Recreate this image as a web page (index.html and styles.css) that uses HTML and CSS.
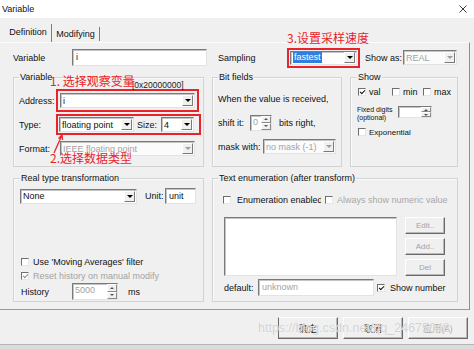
FILE: index.html
```html
<!DOCTYPE html>
<html>

<head>
  <title>Variable</title>
  <link rel="stylesheet" href="styles.css">
</head>

<body>
  <div class="window">
    <!-- Title bar -->
    <div class="titlebar">
      <span>Variable</span>
      <svg class="close" width="8" height="8" viewBox="0 0 8 8">
        <path d="M0.5 0.5 L7.5 7.5 M7.5 0.5 L0.5 7.5" stroke="#222" stroke-width="0.9" fill="none"/>
      </svg>
    </div>

    <!-- Tabs -->
    <div class="tabs">
      <div class="tab active">Definition</div>
      <div class="tab">Modifying</div>
    </div>

    <div class="panel">
      <!-- Variable / Sampling row -->
      <div class="top-row">
        <span class="lbl-var">Variable</span>
        <div class="edit var-name">i</div>
        <span class="lbl-sampling">Sampling</span>
        <div class="combo sampling mark"><span class="selected">fastest</span><span class="drop"></span></div>
        <span class="lbl-showas">Show as:</span>
        <div class="combo showas disabled"><span>REAL</span><span class="drop"></span></div>
      </div>

      <div class="groups-top">
        <!-- Variable group -->
        <div class="group g-variable">
          <div class="group-title">Variable</div>
          <div class="rows">
            <div class="row">
              <span class="row-lbl">Address:</span>
              <div class="combo address mark"><span>i</span><span class="drop"></span></div>
            </div>
            <div class="row">
              <span class="row-lbl">Type:</span>
              <div class="type-wrap mark">
                <div class="combo type"><span>floating point</span><span class="drop"></span></div>
                <span class="size-lbl">Size:</span>
                <div class="combo size"><span>4</span><span class="drop"></span></div>
              </div>
            </div>
            <div class="row">
              <span class="row-lbl">Format:</span>
              <div class="combo format disabled"><span>IEEE floating point</span><span class="drop"></span></div>
            </div>
          </div>
          <span class="addr-value">[0x20000000]</span>
          <span class="note note-1">1. 选择观察变量</span>
          <span class="note note-2">2.选择数据类型</span>
          <svg class="arrow" width="14" height="22" viewBox="0 0 14 22">
            <path d="M2 21 L10 3 M10 3 L6.5 6.5 M10 3 L10.6 8" stroke="#e8232b" stroke-width="1.3" fill="none"/>
          </svg>
        </div>

        <!-- Bit fields group -->
        <div class="group g-bits">
          <div class="group-title">Bit fields</div>
          <div class="rows bit-rows">
            <div class="row">When the value is received,</div>
            <div class="row">
              <span class="shift-lbl">shift it:</span>
              <div class="spin shift"><span class="spin-val">0</span><span class="updown"><span class="up"></span><span class="down"></span></span></div>
              <span class="bits-lbl">bits right,</span>
            </div>
            <div class="row">
              <span class="mask-lbl">mask with:</span>
              <div class="combo mask disabled"><span>no mask (-1)</span><span class="drop"></span></div>
            </div>
          </div>
        </div>

        <!-- Show group -->
        <div class="group g-show">
          <div class="group-title">Show</div>
          <div class="show-checks">
            <label class="check check-val"><span class="box checked"></span>val</label>
            <label class="check check-min"><span class="box"></span>min</label>
            <label class="check"><span class="box"></span>max</label>
          </div>
          <div class="fixed-row">
            <span class="fixed-lbl">Fixed digits<br>(optional)</span>
            <div class="spin fixed"><span class="spin-val"></span><span class="updown"><span class="up"></span><span class="down"></span></span></div>
          </div>
          <label class="check exp"><span class="box"></span>Exponential</label>
        </div>
      </div>

      <div class="groups-bottom">
        <!-- Real type transformation -->
        <div class="group g-real">
          <div class="group-title">Real type transformation</div>
          <div class="real-row">
            <div class="combo none"><span>None</span><span class="drop"></span></div>
            <span class="unit-lbl">Unit:</span>
            <div class="edit unit">unit</div>
          </div>
          <div class="real-bottom">
            <label class="check avg"><span class="box"></span>Use 'Moving Averages' filter</label>
            <label class="check avg reset"><span class="box checked"></span>Reset history on manual modify</label>
            <div class="history-row">
              <span class="history-lbl">History</span>
              <div class="spin history"><span class="spin-val">5000</span><span class="updown"><span class="up"></span><span class="down"></span></span></div>
              <span class="ms-lbl">ms</span>
            </div>
          </div>
        </div>

        <!-- Text enumeration -->
        <div class="group g-enum">
          <div class="group-title">Text enumeration (after transform)</div>
          <div class="enum-checks">
            <label class="check enum-on"><span class="box"></span><span class="clip">Enumeration enabled</span></label>
            <label class="check always"><span class="box"></span>Always show numeric value</label>
          </div>
          <div class="enum-list-row">
            <div class="listbox"></div>
            <div class="enum-buttons">
              <div class="btn small">Edit..</div>
              <div class="btn small">Add..</div>
              <div class="btn small">Del</div>
            </div>
          </div>
          <div class="default-row">
            <span class="default-lbl">default:</span>
            <div class="edit default disabled-text">unknown</div>
            <label class="check show-num"><span class="box checked"></span>Show number</label>
          </div>
        </div>
      </div>
    </div>

    <!-- Dialog buttons -->
    <div class="dialog-buttons">
      <div class="btn main default-btn">确定</div>
      <div class="btn main">取消</div>
      <div class="btn main disabled-text">应用(A)</div>
    </div>

    <span class="note note-3">3.设置采样速度</span>
    <span class="watermark">https://blog.csdn.net/qq_24675048</span>
  </div>
</body>

</html>
```

FILE: styles.css
```css
/* Global */
* {
  box-sizing: border-box;
}

body {
  margin: 0;
  width: 474px;
  height: 349px;
  overflow: hidden;
  background-color: #dcdcdc;
  font-family: "Liberation Sans", Arial, sans-serif;
  font-size: 9px;
  color: #111;
}

.window {
  position: relative;
  height: 345px;
  background-color: #f0f0f0;
  border-bottom: 1px solid #b4b4b4;
}

/* Title bar */
.titlebar {
  height: 18px;
  background-color: #fff;
  display: flex;
  align-items: center;
  justify-content: space-between;
  padding: 0 7px 0 2px;
}

/* Tabs */
.tabs {
  display: flex;
  align-items: flex-end;
  height: 24px;
  padding-left: 5px;
}

.tab {
  width: 48px;
  height: 14px;
  margin-bottom: 1px;
  display: flex;
  align-items: center;
  justify-content: center;
  border-right: 1px solid #7d7d7d;
}

.tab.active {
  width: 47px;
  height: 18px;
  margin-bottom: 0;
  padding-bottom: 3px;
}

/* Tab panel */
.panel {
  width: 470px;
  height: 268px;
  padding: 6px 0 0 13px;
  border-top: 1px solid #fbfbfb;
  border-right: 1px solid #8e8e8e;
  border-bottom: 1px solid #9a9a9a;
}

.top-row {
  display: flex;
  align-items: center;
  height: 17px;
}

.lbl-var {
  width: 59px;
}

.lbl-sampling {
  width: 72px;
  margin-left: 11px;
}

.lbl-showas {
  width: 38px;
  margin-left: 8px;
}

/* Controls */
.edit,
.combo,
.spin {
  background-color: #fff;
  border: 1px solid;
  border-color: #7a7a7a #e3e3e3 #e3e3e3 #7a7a7a;
  box-shadow: inset 1px 1px 0 #c4c4c4;
}

.edit {
  height: 17px;
  padding-left: 3px;
  line-height: 15px;
}

.combo {
  height: 15px;
  display: flex;
  align-items: center;
  justify-content: space-between;
  padding-left: 2px;
}

.drop {
  width: 11px;
  height: 11px;
  margin-right: 1px;
  display: flex;
  align-items: center;
  justify-content: center;
  background-color: #f0f0f0;
  border: 1px solid;
  border-color: #fff #7a7a7a #7a7a7a #fff;
}

.drop::after {
  content: "";
  border-left: 3px solid transparent;
  border-right: 3px solid transparent;
  border-top: 3px solid #000;
}

.combo.disabled {
  background-color: #fbfbfb;
  color: #a3a3a3;
}

.combo.disabled .drop::after {
  border-top-color: #9c9c9c;
}

.disabled-text {
  color: #a3a3a3;
}

.var-name {
  width: 135px;
}

.sampling {
  width: 67px;
  height: 14px;
}

.selected {
  background-color: #2f7fe0;
  color: #fff;
  padding: 0 1px;
  line-height: 11px;
}

.showas {
  width: 54px;
}

/* Red annotations */
.mark {
  outline: 2px solid #e8232b;
  outline-offset: 2px;
}

.sampling.mark {
  outline-offset: 1px;
}

.note {
  position: absolute;
  color: #e8232b;
  font-family: "Noto Sans CJK SC", sans-serif;
  font-size: 12px;
  line-height: 14px;
  white-space: nowrap;
}

.note-1 {
  left: 36px;
  top: -4px;
}

.note-2 {
  left: 36px;
  top: 73px;
}

.note-3 {
  left: 287px;
  top: 31px;
}

.arrow {
  position: absolute;
  left: 38px;
  top: 54px;
}

.addr-value {
  position: absolute;
  left: 118px;
  top: 2px;
  font-size: 8.5px;
  line-height: 10px;
  color: #222;
}

/* Group boxes */
.groups-top {
  display: grid;
  grid-template-columns: 191px 130px 108px;
  column-gap: 8px;
  margin-top: 11px;
  height: 90px;
}

.groups-bottom {
  display: grid;
  grid-template-columns: 191px 246px;
  column-gap: 8px;
  margin-top: 11px;
  height: 124px;
}

.group {
  position: relative;
  border: 1px solid #d3d3d3;
  box-shadow: inset 1px 1px 0 #fafafa;
  padding: 0 5px;
}

.group-title {
  width: max-content;
  margin-top: -6px;
  padding: 0 1px;
  line-height: 11px;
  background-color: #f0f0f0;
}

.rows {
  display: flex;
  flex-direction: column;
  gap: 9px;
  padding-top: 10px;
}

.row {
  display: flex;
  align-items: center;
  height: 15px;
}

.row-lbl {
  width: 41px;
}

.address {
  width: 135px;
}

.type-wrap {
  display: flex;
  align-items: center;
  width: 139px;
  padding-right: 4px;
}

.mark.type-wrap {
  outline-offset: 1px;
}

.type {
  width: 75px;
}

.size-lbl {
  width: 24px;
  margin-left: 3px;
}

.size {
  width: 33px;
}

.format {
  width: 135px;
}

/* Bit fields */
.bit-rows {
  padding-top: 8px;
}

.shift-lbl {
  width: 32px;
}

.bits-lbl {
  margin-left: 7px;
}

.mask-lbl {
  width: 45px;
}

.mask {
  width: 73px;
}

/* Spinners */
.spin {
  display: flex;
  height: 15px;
}

.spin-val {
  flex: 1;
  padding-left: 2px;
  line-height: 13px;
  color: #a3a3a3;
}

.updown {
  width: 10px;
  display: flex;
  flex-direction: column;
}

.updown span {
  flex: 1;
  display: flex;
  align-items: center;
  justify-content: center;
  background-color: #f0f0f0;
  border: 1px solid;
  border-color: #fff #8a8a8a #8a8a8a #fff;
}

.up::after,
.down::after {
  content: "";
  border-left: 2px solid transparent;
  border-right: 2px solid transparent;
}

.up::after {
  border-bottom: 2px solid #555;
}

.down::after {
  border-top: 2px solid #555;
}

.shift {
  width: 22px;
  height: 16px;
}

.fixed {
  width: 34px;
  height: 12px;
}

.history {
  width: 46px;
  height: 17px;
}

/* Checkboxes */
.check {
  display: flex;
  align-items: center;
  gap: 3px;
  white-space: nowrap;
}

.box {
  width: 8px;
  height: 8px;
  flex-shrink: 0;
  display: flex;
  align-items: center;
  justify-content: center;
  background-color: #fff;
  border: 1px solid;
  border-color: #6e6e6e #e6e6e6 #e6e6e6 #6e6e6e;
}

.box.checked::after {
  content: "";
  width: 2px;
  height: 4px;
  margin-top: -1px;
  border-right: 1.5px solid #111;
  border-bottom: 1.5px solid #111;
  transform: rotate(45deg);
}

/* Show group */
.g-show {
  padding: 0 6px;
}

.show-checks {
  display: flex;
  align-items: center;
  height: 10px;
  margin-top: 4px;
  padding-left: 1px;
}

.check-val {
  width: 34px;
}

.check-min {
  width: 31px;
}

.fixed-row {
  display: flex;
  align-items: flex-start;
  margin-top: 9px;
}

.fixed-lbl {
  width: 41px;
  font-size: 7px;
  line-height: 8px;
}

.exp {
  margin-top: 5px;
  padding-left: 1px;
  height: 10px;
  font-size: 8px;
}

/* Real type transformation */
.g-real {
  display: flex;
  flex-direction: column;
  padding: 0 6px 1px;
}

.real-row {
  display: flex;
  align-items: center;
  margin-top: 4px;
}

.none {
  width: 117px;
}

.unit-lbl {
  width: 20px;
  margin-left: 8px;
}

.unit {
  width: 31px;
  height: 16px;
  line-height: 14px;
}

.real-bottom {
  margin-top: auto;
}

.avg {
  height: 10px;
  gap: 4px;
  padding-left: 1px;
}

.reset {
  margin-top: 4px;
  color: #a3a3a3;
}

.reset .box.checked::after {
  border-color: #8c8c8c;
}

.history-row {
  display: flex;
  align-items: center;
  margin-top: 2px;
  padding-left: 1px;
}

.history-lbl {
  width: 51px;
}

.ms-lbl {
  margin-left: 10px;
}

/* Text enumeration */
.enum-checks {
  display: flex;
  align-items: center;
  height: 10px;
  margin-top: 11px;
  padding-left: 5px;
}

.enum-on {
  width: 102px;
  gap: 6px;
  overflow: hidden;
}

.clip {
  overflow: hidden;
  width: 84px;
}

.always {
  color: #a8a8a8;
  gap: 4px;
}

.enum-list-row {
  display: flex;
  margin-top: 12px;
  padding-left: 6px;
}

.listbox {
  width: 173px;
  height: 59px;
  background-color: #fff;
  border: 1px solid;
  border-color: #7a7a7a #e3e3e3 #e3e3e3 #7a7a7a;
  box-shadow: inset 1px 1px 0 #c4c4c4;
}

.enum-buttons {
  display: flex;
  flex-direction: column;
  gap: 4px;
  margin-left: 8px;
}

.default-row {
  display: flex;
  align-items: center;
  margin-top: 3px;
  padding-left: 6px;
}

.default-lbl {
  width: 34px;
}

.default {
  width: 116px;
}

.show-num {
  margin-left: 3px;
  gap: 5px;
}

/* Buttons */
.btn {
  display: flex;
  align-items: center;
  justify-content: center;
  background-color: #f0f0f0;
  border: 1px solid;
  border-color: #fff #6a6a6a #6a6a6a #fff;
  box-shadow: inset -1px -1px 0 #b8b8b8;
}

.btn.small {
  width: 40px;
  height: 17px;
  color: #a3a3a3;
  font-size: 8px;
}

.dialog-buttons {
  display: flex;
  justify-content: flex-end;
  gap: 5px;
  margin-top: 7px;
  padding-right: 6px;
}

.btn.main {
  width: 60px;
  height: 22px;
  font-family: "Noto Sans CJK SC", sans-serif;
  font-size: 9px;
}

.default-btn {
  width: 58px;
  border-left-color: #6a6a6a;
}

.watermark {
  position: absolute;
  left: 258px;
  top: 321px;
  font-size: 12.5px;
  color: #d2d2d2;
  text-shadow: 0 0 1px #fff;
  white-space: nowrap;
}
```
